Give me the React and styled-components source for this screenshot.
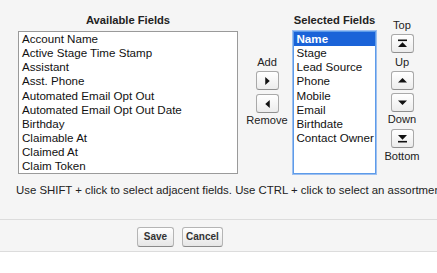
import React from "react";
import styled, { createGlobalStyle } from "styled-components";

const Global = createGlobalStyle`
  html, body { margin: 0; padding: 0; background: #ffffff; }
  body { font-family: "Liberation Sans", Arial, sans-serif; color: #222; }
`;

const Panel = styled.div`
  background: #f5f5f5;
  border-bottom: 1px solid #dcdcdc;
  width: 437px;
  overflow: hidden;
`;

const Main = styled.div`
  display: flex;
  align-items: flex-start;
  padding: 13px 0 0 18px;
`;

const Column = styled.div`
  display: flex;
  flex-direction: column;
  width: ${(p) => p.$w}px;
  margin-right: ${(p) => p.$mr}px;
`;

const Heading = styled.div`
  font-weight: bold;
  font-size: 11.2px;
  line-height: 14px;
  text-align: center;
  color: #222;
  margin-bottom: 4px;
  white-space: nowrap;
`;

const ListBox = styled.div`
  box-sizing: border-box;
  height: 143px;
  background: #fff;
  border: 1px solid ${(p) => (p.$focused ? "#5d9be9" : "#9a9a9a")};
  box-shadow: ${(p) => (p.$focused ? "0 0 0 1px rgba(125,172,238,0.75)" : "none")};
  overflow: hidden;
`;

const Item = styled.div`
  font-size: 11.6px;
  line-height: 14.15px;
  height: 14.15px;
  padding-left: ${(p) => (p.$tight ? 2.5 : 3)}px;
  white-space: nowrap;
  color: ${(p) => (p.$selected ? "#fff" : "#111")};
  background: ${(p) => (p.$selected ? "#1a63d8" : "transparent")};
  font-weight: ${(p) => (p.$selected ? "bold" : "normal")};
`;

const ControlCol = styled.div`
  display: flex;
  flex-direction: column;
  align-items: center;
  width: ${(p) => p.$w}px;
  margin-top: ${(p) => p.$mt}px;
  margin-right: ${(p) => p.$mr || 0}px;
`;

const Label = styled.div`
  font-size: 11.1px;
  line-height: 13px;
  color: #222;
  white-space: nowrap;
  margin-top: ${(p) => p.$mt || 0}px;
`;

const IconButton = styled.button`
  box-sizing: border-box;
  width: 23px;
  height: 19px;
  padding: 0;
  margin: ${(p) => p.$mt || 0}px 0 0 0;
  display: flex;
  align-items: center;
  justify-content: center;
  border: 1px solid #a9a9a9;
  border-bottom-color: #8f8f8f;
  border-radius: 3px;
  background: linear-gradient(#ffffff, #ececec);
`;

const Help = styled.div`
  font-size: 11.4px;
  line-height: 13px;
  color: #222;
  white-space: nowrap;
  padding: 9.5px 0 22.5px 16px;
`;

const Footer = styled.div`
  border-top: 1px solid #dcdcdc;
  display: flex;
  gap: 8px;
  padding: 6.5px 0 4.5px 137px;
`;

const Btn = styled.button`
  box-sizing: border-box;
  height: 20px;
  min-width: 37px;
  padding: 0 3px;
  font-family: "Liberation Sans", Arial, sans-serif;
  font-weight: bold;
  font-size: 10px;
  color: #333;
  border: 1px solid #b5b5b5;
  border-bottom-color: #8a8a8a;
  border-radius: 3px;
  background: linear-gradient(#ffffff, #e6e6e6);
`;

const Tri = ({ dir }) => {
  const paths = {
    right: "M0 0 L4.5 4 L0 8 Z",
    left: "M4.5 0 L0 4 L4.5 8 Z",
  };
  return (
    <svg width="5" height="8" viewBox="0 0 4.5 8">
      <path d={paths[dir]} fill="#111" />
    </svg>
  );
};

const VIcon = ({ kind }) => (
  <svg width="9" height="9" viewBox="0 0 9 9">
    {kind === "top" && (
      <>
        <rect x="0" y="0.5" width="9" height="1.6" fill="#111" />
        <path d="M0 8 L4.5 3.2 L9 8 Z" fill="#111" />
      </>
    )}
    {kind === "up" && <path d="M0 6.5 L4.5 2 L9 6.5 Z" fill="#111" />}
    {kind === "down" && <path d="M0 2.5 L4.5 7 L9 2.5 Z" fill="#111" />}
    {kind === "bottom" && (
      <>
        <path d="M0 1 L4.5 5.8 L9 1 Z" fill="#111" />
        <rect x="0" y="6.9" width="9" height="1.6" fill="#111" />
      </>
    )}
  </svg>
);

const available = [
  "Account Name",
  "Active Stage Time Stamp",
  "Assistant",
  "Asst. Phone",
  "Automated Email Opt Out",
  "Automated Email Opt Out Date",
  "Birthday",
  "Claimable At",
  "Claimed At",
  "Claim Token",
];

const selected = [
  "Name",
  "Stage",
  "Lead Source",
  "Phone",
  "Mobile",
  "Email",
  "Birthdate",
  "Contact Owner",
];

export default function App() {
  return (
    <>
      <Global />
      <Panel>
        <Main>
          <Column $w={220} $mr={8}>
            <Heading>Available Fields</Heading>
            <ListBox>
              {available.map((f) => (
                <Item key={f}>{f}</Item>
              ))}
            </ListBox>
          </Column>
          <ControlCol $w={42} $mt={43} $mr={5}>
            <Label>Add</Label>
            <IconButton $mt={2} aria-label="Add">
              <Tri dir="right" />
            </IconButton>
            <IconButton $mt={4} aria-label="Remove">
              <Tri dir="left" />
            </IconButton>
            <Label $mt={1}>Remove</Label>
          </ControlCol>
          <Column $w={83} $mr={7}>
            <Heading>Selected Fields</Heading>
            <ListBox $focused>
              {selected.map((f, i) => (
                <Item key={f} $tight $selected={i === 0}>
                  {f}
                </Item>
              ))}
            </ListBox>
          </Column>
          <ControlCol $w={38} $mt={5.5}>
            <Label>Top</Label>
            <IconButton $mt={2} aria-label="Top">
              <VIcon kind="top" />
            </IconButton>
            <Label $mt={3.3}>Up</Label>
            <IconButton $mt={2} aria-label="Up">
              <VIcon kind="up" />
            </IconButton>
            <IconButton $mt={3} aria-label="Down">
              <VIcon kind="down" />
            </IconButton>
            <Label $mt={1.7}>Down</Label>
            <IconButton $mt={2.8} aria-label="Bottom">
              <VIcon kind="bottom" />
            </IconButton>
            <Label $mt={2}>Bottom</Label>
          </ControlCol>
        </Main>
        <Help>
          Use SHIFT + click to select adjacent fields. Use CTRL + click to select an assortment of fields.
        </Help>
        <Footer>
          <Btn>Save</Btn>
          <Btn>Cancel</Btn>
        </Footer>
      </Panel>
    </>
  );
}
